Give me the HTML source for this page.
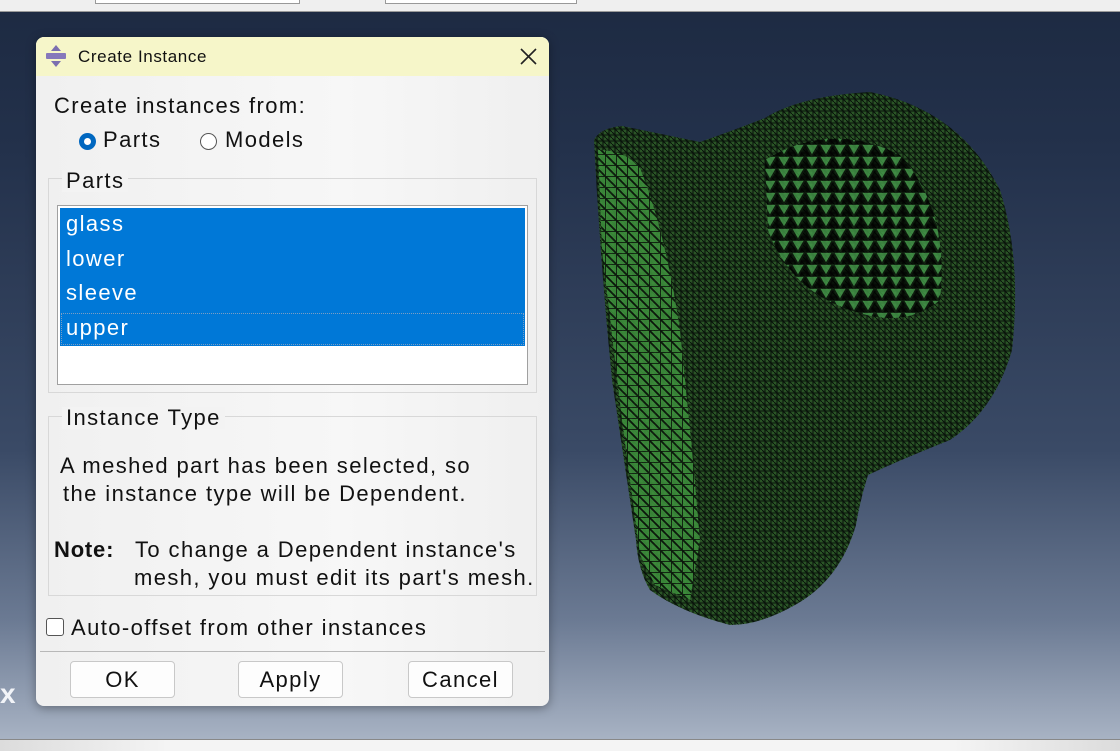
<!DOCTYPE html>
<html><head><meta charset="utf-8"><style>
*{margin:0;padding:0;box-sizing:border-box}
body{width:1120px;height:751px;overflow:hidden;position:relative;font-family:"Liberation Sans",sans-serif;background:linear-gradient(180deg,#1d2a42 0px,#23314b 150px,#3a4a66 450px,#6b7a93 620px,#a7b2c3 738px);}
.top{position:absolute;left:0;top:0;width:1120px;height:12px;background:#efefef;border-bottom:1px solid #9a9a9a}
.inp{position:absolute;top:-2px;height:6px;background:#fff;border:1px solid #999}
.bot{position:absolute;left:0;top:739px;width:1120px;height:12px;background:linear-gradient(90deg,#dcdcdc,#f4f4f4 15%,#f4f4f4 85%,#dcdcdc);border-top:1px solid #888}
.dlg{position:absolute;left:36px;top:37px;width:513px;height:669px;border-radius:8px;overflow:hidden;background:linear-gradient(90deg,#f0f0f0,#f7f7f7 60%,#efefef);box-shadow:0 2px 10px rgba(0,0,0,.35);letter-spacing:1.4px}
.title{height:39px;background:#f6f6c9;position:relative;font-size:17px;color:#111;letter-spacing:0.6px}
.t{position:absolute;font-size:22px;color:#111;white-space:nowrap;line-height:1}
.grp{position:absolute;border:1px solid #d8d8d8}
.lbl{position:absolute;background:#f3f3f3;padding:0 4px;font-size:22px;color:#111;line-height:1}
.list{position:absolute;left:21px;top:168px;width:471px;height:180px;background:#fff;border:1px solid #a0a0a0}
.row{position:absolute;left:2px;width:465px;height:34.5px;background:#0078d7;color:#fff;font-size:22px;padding-left:6px;line-height:32px}
.btn{position:absolute;top:624px;width:105px;height:37px;border:1px solid #c8c8c8;border-radius:4px;background:#fdfdfd;font-size:22px;text-align:center;line-height:35px;color:#111}
</style></head><body>
<div class="top"><div class="inp" style="left:95px;width:205px"></div><div class="inp" style="left:385px;width:192px"></div></div>

<svg style="position:absolute;left:0;top:0" width="1120" height="751">
<defs>
<pattern id="tri" width="11" height="11" patternUnits="userSpaceOnUse">
<rect width="11" height="11" fill="#3f943e"/>
<path d="M0 0L11 11M0 0H11M0 0V11" stroke="#0a140a" stroke-width="1.8"/>
</pattern>
<pattern id="tri2" width="14" height="12" patternUnits="userSpaceOnUse">
<rect width="14" height="12" fill="#44984a"/>
<path d="M0 0H14M0 12L7 0L14 12" stroke="#0a140a" stroke-width="1.8"/>
</pattern>
<pattern id="dense" width="6" height="6" patternUnits="userSpaceOnUse">
<rect width="6" height="6" fill="#2a5426"/>
<path d="M0 0L6 6M0 3H6M3 0V6" stroke="#08110a" stroke-width="1.1"/>
</pattern>
</defs>
<path d="M594 140 Q600 128 622 126 L700 142 Q740 128 765 118 Q800 96 870 92 Q960 110 1000 190 Q1022 260 1012 350 Q995 410 950 440 Q900 460 868 475 Q860 500 856 525 Q840 580 795 605 Q760 625 730 625 Q680 612 650 590 Q638 570 636 540 L612 380 Q600 260 594 140 Z" fill="url(#dense)"/>
<path d="M598 150 Q625 150 640 168 Q665 230 680 330 L692 450 L700 540 L690 600 L655 585 L640 555 L622 420 L602 250 Z" fill="url(#tri)" opacity=".85"/>
<path d="M765 160 Q830 120 900 155 Q950 210 940 300 Q905 330 850 310 Q790 290 768 230 Z" fill="url(#tri2)" opacity=".8"/>
</svg>

<div style="position:absolute;left:0;top:680px;color:#f2f4f8;font-weight:bold;font-size:28px;line-height:1">x</div>

<div class="dlg">
 <div class="title">
  <svg style="position:absolute;left:9px;top:8px" width="22" height="22" viewBox="0 0 22 22"><path d="M11 0L16 6H6Z M11 22L16 16H6Z" fill="#7b6fb0"/><rect x="1" y="8" width="20" height="6" rx="1" fill="#8678bb"/></svg>
  <span style="position:absolute;left:42px;top:10px">Create Instance</span>
  <svg style="position:absolute;left:484px;top:11px" width="17" height="17"><path d="M1 1L16 16M16 1L1 16" stroke="#222" stroke-width="1.6"/></svg>
 </div>
 <div class="t" style="left:18px;top:58px">Create instances from:</div>
 <div style="position:absolute;left:43px;top:96px;width:17px;height:17px;border-radius:50%;background:#0067c0"><div style="position:absolute;left:5px;top:5px;width:7px;height:7px;border-radius:50%;background:#fff"></div></div>
 <div class="t" style="left:67px;top:92px">Parts</div>
 <div style="position:absolute;left:164px;top:96px;width:17px;height:17px;border-radius:50%;border:1px solid #555;background:#fff"></div>
 <div class="t" style="left:189px;top:92px">Models</div>

 <div class="grp" style="left:12px;top:141px;width:489px;height:215px"></div>
 <div class="lbl" style="left:26px;top:133px">Parts</div>
 <div class="list">
  <div class="row" style="top:2px">glass</div>
  <div class="row" style="top:36.5px">lower</div>
  <div class="row" style="top:71px">sleeve</div>
  <div class="row" style="top:105.5px;outline:1px dotted #7a9ec4;outline-offset:-2px">upper</div>
 </div>

 <div class="grp" style="left:12px;top:379px;width:489px;height:180px"></div>
 <div class="lbl" style="left:26px;top:370px">Instance Type</div>
 <div class="t" style="left:24px;top:418px">A meshed part has been selected, so</div>
 <div class="t" style="left:27px;top:446px">the instance type will be Dependent.</div>
 <div class="t" style="left:18px;top:502px;font-weight:bold;letter-spacing:0.8px">Note:</div>
 <div class="t" style="left:99px;top:502px">To change a Dependent instance's</div>
 <div class="t" style="left:98px;top:530px">mesh, you must edit its part's mesh.</div>

 <div style="position:absolute;left:10px;top:581px;width:18px;height:18px;border:1px solid #555;border-radius:3px;background:#fff"></div>
 <div class="t" style="left:35px;top:580px">Auto-offset from other instances</div>
 <div style="position:absolute;left:4px;top:614px;width:505px;height:1px;background:#b8b8b8"></div>
 <div class="btn" style="left:34px">OK</div>
 <div class="btn" style="left:202px">Apply</div>
 <div class="btn" style="left:372px">Cancel</div>
</div>
<div class="bot"></div>
</body></html>
